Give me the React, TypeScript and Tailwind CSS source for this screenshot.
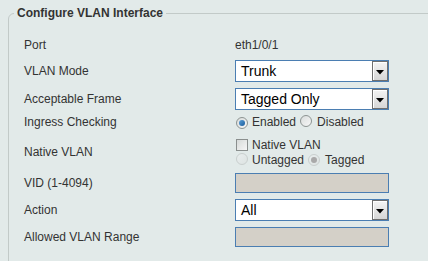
import React from "react";

function Select({ value }: { value: string }) {
  return (
    <div className="flex h-[22px] w-[154px] items-stretch border border-[#4b7eb2] bg-white">
      <div className="flex flex-1 items-center pl-[5px] text-[14px] leading-none text-black">{value}</div>
      <div className="flex w-[16px] items-center justify-center border border-[#6f6f6f] bg-gradient-to-b from-[#f4f4f4] to-[#d6d6d6] shadow-[inset_1px_1px_0_#ffffff]">
        <svg width="8" height="5" viewBox="0 0 8 5" className="mt-[2px]">
          <polygon points="0,0 8,0 4,4.5" fill="#000" />
        </svg>
      </div>
    </div>
  );
}

function Input() {
  return <div className="h-[20px] w-[154px] border border-[#4b7eb2] bg-[#d4d0c8]" />;
}

function Radio({ checked, disabled }: { checked?: boolean; disabled?: boolean }) {
  return (
    <span
      className={
        "inline-flex h-[12px] w-[12px] items-center justify-center rounded-full border " +
        (disabled
          ? "border-[#c9cfce] bg-gradient-to-br from-[#e9eeee] to-[#dde3e2]"
          : "border-[#8d9492] bg-gradient-to-br from-[#d9dddc] to-[#f7f7f7]")
      }
    >
      {checked && (
        <span
          className={
            "h-[6px] w-[6px] rounded-full " +
            (disabled ? "bg-[#a9a9a9]" : "bg-gradient-to-br from-[#5aa0d8] to-[#1b5d9c]")
          }
        />
      )}
    </span>
  );
}

function Row({ label, h, children }: { label: string; h: string; children?: React.ReactNode }) {
  return (
    <div className={"flex items-center " + h}>
      <div className="w-[211px] text-[12px] leading-none text-[#333333]">{label}</div>
      <div className="flex flex-col">{children}</div>
    </div>
  );
}

export default function App() {
  return (
    <div
      className="h-[261px] w-[428px] overflow-hidden bg-[#e2eae9]"
      style={{ fontFamily: '"Liberation Sans", Arial, sans-serif' }}
    >
      <fieldset className="ml-[8px] mt-[6px] h-[300px] w-[440px] rounded-tl-[6px] border border-[#c2cac8]">
        <legend className="ml-[5px] px-[3px] text-[12px] font-bold leading-[14px] text-[#333333]">
          Configure VLAN Interface
        </legend>
        <div className="pl-[15px] pt-[13px]">
          <Row label="Port" h="h-[24px]">
            <span className="text-[12px] leading-none text-[#333333]">eth1/0/1</span>
          </Row>
          <Row label="VLAN Mode" h="h-[28px]">
            <Select value="Trunk" />
          </Row>
          <Row label="Acceptable Frame" h="h-[28px]">
            <Select value="Tagged Only" />
          </Row>
          <Row label="Ingress Checking" h="h-[18px]">
            <div className="flex items-center text-[12px] leading-none text-[#333333]">
              <span className="ml-[1px]"><Radio checked /></span>
              <span className="ml-[4px]">Enabled</span>
              <span className="ml-[4px]"><Radio /></span>
              <span className="ml-[5px]">Disabled</span>
            </div>
          </Row>
          <Row label="Native VLAN" h="h-[42px]">
            <div className="flex h-[15px] items-center text-[12px] leading-none text-[#333333]">
              <span className="ml-[1px] inline-block h-[12px] w-[12px] border border-[#8a8f8e] bg-gradient-to-br from-[#d6dad9] to-[#f6f6f6]" />
              <span className="ml-[4px]">Native VLAN</span>
            </div>
            <div className="flex h-[15px] items-center text-[12px] leading-none text-[#333333]">
              <span className="ml-[1px]"><Radio disabled /></span>
              <span className="ml-[4px]">Untagged</span>
              <span className="ml-[4px]"><Radio checked disabled /></span>
              <span className="ml-[5px]">Tagged</span>
            </div>
          </Row>
          <Row label="VID (1-4094)" h="h-[20px]">
            <Input />
          </Row>
          <Row label="Action" h="h-[34px]">
            <Select value="All" />
          </Row>
          <Row label="Allowed VLAN Range" h="h-[20px]">
            <Input />
          </Row>
        </div>
      </fieldset>
    </div>
  );
}
